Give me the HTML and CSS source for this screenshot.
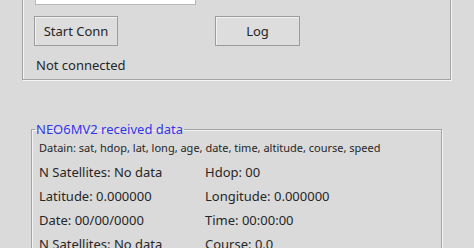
FILE: index.html
```html
<!DOCTYPE html>
<html>
<head>
<meta charset="utf-8">
<link rel="stylesheet" href="styles.css">
</head>
<body>
<div class="window">
  <div class="conn-frame">
    <div class="text-field"></div>
    <div class="button-row">
      <button class="btn btn-start">Start Conn</button>
      <button class="btn btn-log">Log</button>
    </div>
    <div class="status">Not connected</div>
  </div>
  <fieldset class="group">
    <legend class="group-title">NEO6MV2 received data</legend>
    <div class="datain">Datain: sat, hdop, lat, long, age, date, time, altitude, course, speed</div>
    <div class="grid">
      <div class="cell">N Satellites: No data</div>
      <div class="cell">Hdop: 00</div>
      <div class="cell">Latitude: 0.000000</div>
      <div class="cell">Longitude: 0.000000</div>
      <div class="cell">Date: 00/00/0000</div>
      <div class="cell">Time: 00:00:00</div>
      <div class="cell">N Satellites: No data</div>
      <div class="cell">Course: 0.0</div>
    </div>
  </fieldset>
</div>
</body>
</html>
```

FILE: styles.css
```css
html, body {
  margin: 0;
  padding: 0;
  background: #dadada;
  overflow: hidden;
}
body {
  width: 474px;
  height: 248px;
  font-family: "Noto Sans", "Open Sans", sans-serif;
  color: #262626;
}
.window {
  display: flex;
  flex-direction: column;
  align-items: flex-start;
  padding-left: 22px;
}
.conn-frame {
  width: 405px;
  height: 96px;
  margin-top: -27px;
  padding: 9px 11px 0 11px;
  border: 1px solid #a3a3a3;
  box-shadow: inset 1px 1px 0 #f4f4f4, 1px 1px 0 #f4f4f4;
  box-sizing: content-box;
}
.text-field {
  width: 161px;
  height: 22px;
  margin-left: 1px;
  background: #ffffff;
  border: 1px solid #b8b8b8;
  box-sizing: border-box;
}
.button-row {
  display: flex;
  gap: 97px;
  margin-top: 11px;
}
.btn {
  width: 84px;
  height: 30px;
  padding: 0;
  background: #dddddd;
  border: 1px solid #9c9c9c;
  box-shadow: inset 1px 1px 0 #f2f2f2;
  font-family: inherit;
  font-size: 13px;
  color: #262626;
}
.btn-log {
  width: 85px;
}
.status {
  margin-top: 10px;
  margin-left: 2px;
  font-size: 13px;
  line-height: 18px;
}
.group {
  margin: 41px 0 0 9px;
  width: 402px;
  padding: 2px 0 0 7px;
  border: 1px solid #a3a3a3;
  box-shadow: inset 1px 1px 0 #f4f4f4, 1px 1px 0 #f4f4f4;
  min-inline-size: 0;
  box-sizing: content-box;
}
.group-title {
  color: #3535e8;
  font-size: 13px;
  padding: 0 1px;
  margin-left: -4px;
  line-height: 16px;
}
.datain {
  font-size: 11px;
  line-height: 16px;
  margin-top: 1px;
}
.grid {
  display: grid;
  grid-template-columns: 166px 1fr;
  grid-auto-rows: 24px;
  margin-top: 4px;
  font-size: 13px;
  line-height: 24px;
}
```
